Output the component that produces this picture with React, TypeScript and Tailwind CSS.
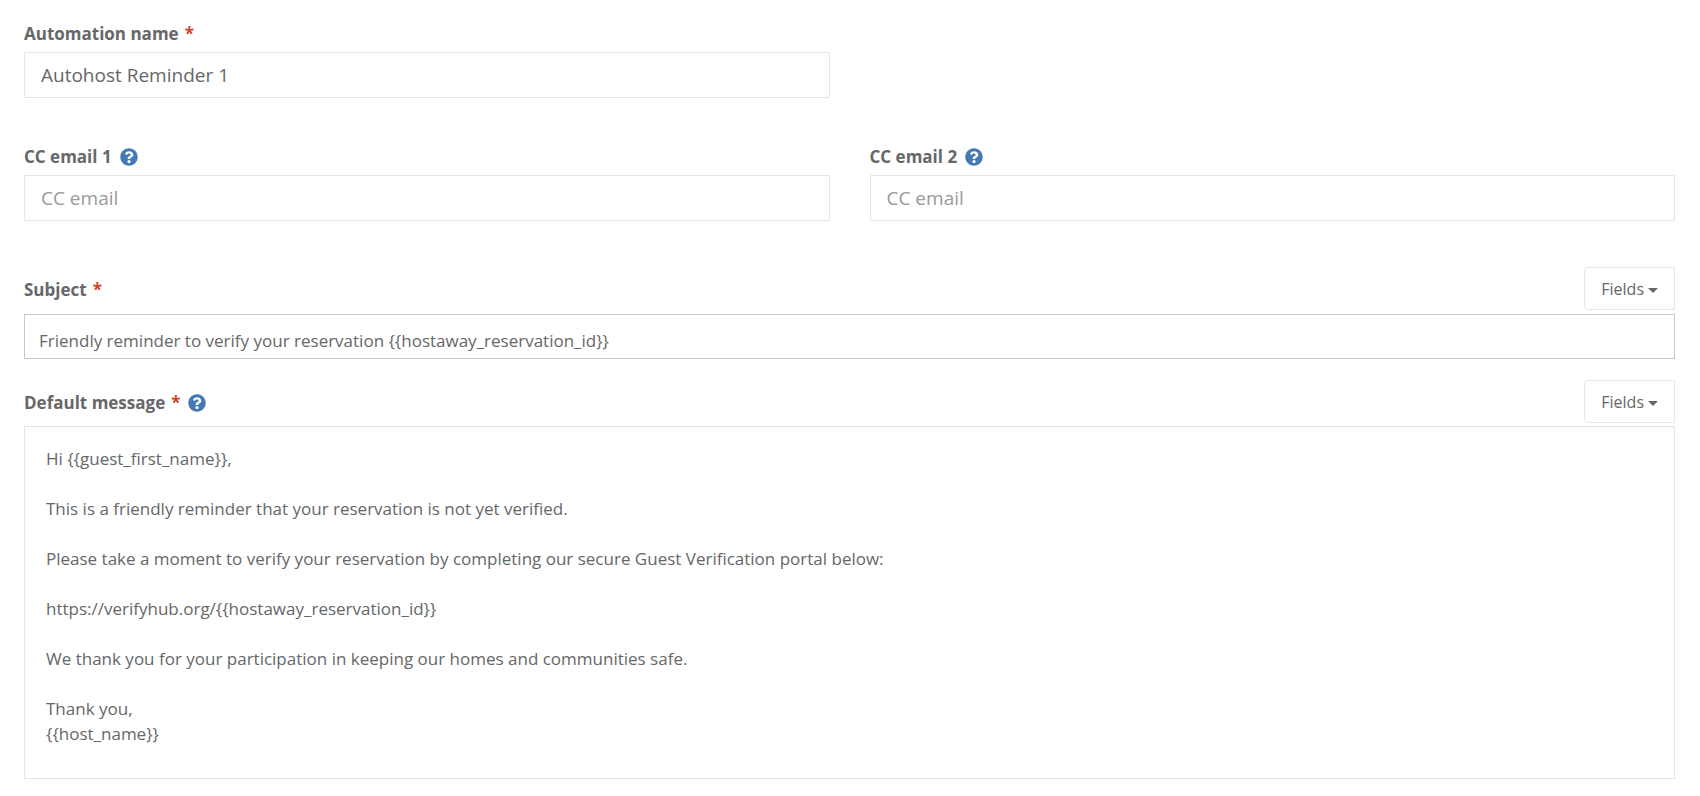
import React, { useState } from "react"
import { FaQuestionCircle } from "react-icons/fa"

const defaultMessage = `Hi {{guest_first_name}},

This is a friendly reminder that your reservation is not yet verified.

Please take a moment to verify your reservation by completing our secure Guest Verification portal below:

https://verifyhub.org/{{hostaway_reservation_id}}

We thank you for your participation in keeping our homes and communities safe.

Thank you,
{{host_name}}`

type LabelProps = {
  htmlFor: string
  text: string
  required?: boolean
  help?: boolean
}

function FieldLabel({ htmlFor, text, required, help }: LabelProps) {
  return (
    <label htmlFor={htmlFor} className="flex items-center gap-1.5 text-[17px] leading-6 font-bold">
      {text}
      {required && <span className="text-[#d0431f]">*</span>}
      {help && <FaQuestionCircle className="ml-0.5 h-[18px] w-[18px] text-[#4479b5]" />}
    </label>
  )
}

function FieldsButton() {
  return (
    <button
      type="button"
      className="flex h-[43px] items-center gap-1 rounded-l border border-[#e7e7e7] px-4 text-base hover:bg-gray-50"
    >
      Fields
      <svg viewBox="0 0 10 5" className="mt-1 h-[5px] w-[10px]" fill="currentColor" aria-hidden="true">
        <path d="M0 0h10L5 5z" />
      </svg>
    </button>
  )
}

const inputStyles =
  "h-[46px] w-full rounded-[1px] border border-[#e4e4e4] bg-white px-4 text-[19px] outline-none placeholder:text-[#999]"

export default function App() {
  const [name, setName] = useState<string>("Autohost Reminder 1")
  const [cc1, setCc1] = useState<string>("")
  const [cc2, setCc2] = useState<string>("")
  const [subject, setSubject] = useState<string>(
    "Friendly reminder to verify your reservation {{hostaway_reservation_id}}"
  )
  const [message, setMessage] = useState<string>(defaultMessage)

  return (
    <form className="min-h-screen bg-white pt-[22px] pr-[25px] pb-4 pl-6 font-['Open_Sans',sans-serif] text-[#666769]">
      <div className="grid grid-cols-2 gap-x-10 gap-y-[47px]">
        <div className="col-span-2 grid grid-cols-2 gap-x-10">
          <div className="flex flex-col gap-1.5">
            <FieldLabel htmlFor="name" text="Automation name" required />
            <input id="name" className={inputStyles} value={name} onChange={e => setName(e.target.value)} />
          </div>
        </div>
        <div className="flex flex-col gap-1.5">
          <FieldLabel htmlFor="cc1" text="CC email 1" help />
          <input
            id="cc1"
            className={inputStyles}
            placeholder="CC email"
            value={cc1}
            onChange={e => setCc1(e.target.value)}
          />
        </div>
        <div className="flex flex-col gap-1.5">
          <FieldLabel htmlFor="cc2" text="CC email 2" help />
          <input
            id="cc2"
            className={inputStyles}
            placeholder="CC email"
            value={cc2}
            onChange={e => setCc2(e.target.value)}
          />
        </div>
      </div>

      <div className="mt-[46px] flex items-end justify-between">
        <div className="pb-2">
          <FieldLabel htmlFor="subject" text="Subject" required />
        </div>
        <FieldsButton />
      </div>
      <input
        id="subject"
        className="mt-1 block h-[45px] w-full border border-[#c8c8c8] px-3.5 pt-2 text-[17px] outline-none"
        value={subject}
        onChange={e => setSubject(e.target.value)}
      />

      <div className="mt-[21px] flex items-end justify-between">
        <div className="pb-2">
          <FieldLabel htmlFor="message" text="Default message" required help />
        </div>
        <FieldsButton />
      </div>
      <textarea
        id="message"
        rows={12}
        className="mt-[3px] block w-full resize-none border border-[#e4e4e4] px-[21px] pt-[19px] pb-8 text-[17px] leading-[25px] outline-none"
        value={message}
        onChange={e => setMessage(e.target.value)}
      />
    </form>
  )
}
